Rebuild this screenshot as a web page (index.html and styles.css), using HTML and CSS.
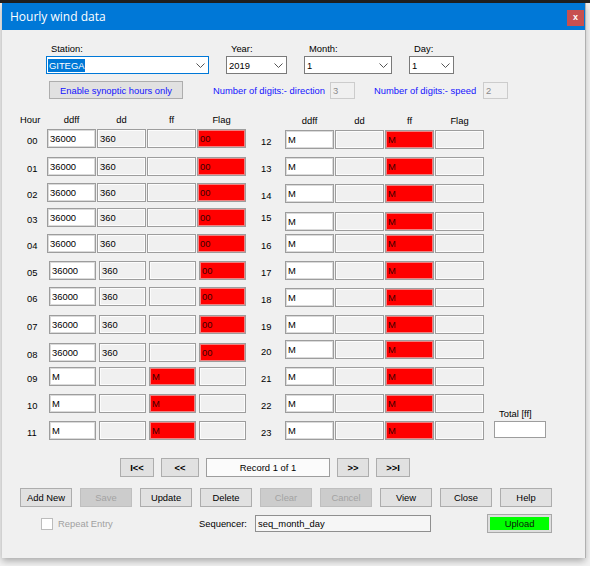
FILE: index.html
```html
<!DOCTYPE html>
<html>
<head>
<meta charset="utf-8">
<title>Hourly wind data</title>
<link rel="stylesheet" href="styles.css">
</head>
<body>
<div class="window">
  <div class="titlebar">
    <span class="title">Hourly wind data</span>
    <span class="close">x</span>
  </div>
  <div class="content">
    <div class="selectors">
      <div class="field f-station">
        <label>Station:</label>
        <div class="combo focused"><span class="sel">GITEGA</span><svg class="chev" width="9" height="5" viewBox="0 0 9 5"><polyline points="0.5,0.5 4.5,4.5 8.5,0.5" fill="none" stroke="#555" stroke-width="1"/></svg></div>
      </div>
      <div class="field f-year">
        <label>Year:</label>
        <div class="combo"><span>2019</span><svg class="chev" width="9" height="5" viewBox="0 0 9 5"><polyline points="0.5,0.5 4.5,4.5 8.5,0.5" fill="none" stroke="#555" stroke-width="1"/></svg></div>
      </div>
      <div class="field f-month">
        <label>Month:</label>
        <div class="combo"><span>1</span><svg class="chev" width="9" height="5" viewBox="0 0 9 5"><polyline points="0.5,0.5 4.5,4.5 8.5,0.5" fill="none" stroke="#555" stroke-width="1"/></svg></div>
      </div>
      <div class="field f-day">
        <label>Day:</label>
        <div class="combo"><span>1</span><svg class="chev" width="9" height="5" viewBox="0 0 9 5"><polyline points="0.5,0.5 4.5,4.5 8.5,0.5" fill="none" stroke="#555" stroke-width="1"/></svg></div>
      </div>
    </div>

    <div class="options">
      <button class="btn synoptic">Enable synoptic hours only</button>
      <span class="digits-label dl-dir">Number of digits:- direction</span>
      <span class="digits-box">3</span>
      <span class="digits-label dl-speed">Number of digits:- speed</span>
      <span class="digits-box">2</span>
    </div>

    <div class="tables">
      <div class="grid grid-left">
        <div class="hdr hdr-hour">Hour</div><div class="hdr">ddff</div><div class="hdr">dd</div><div class="hdr">ff</div><div class="hdr">Flag</div>
        <div class="hr">00</div><div class="box white">36000</div><div class="box grey">360</div><div class="box grey"></div><div class="box red">00</div>
        <div class="hr">01</div><div class="box white">36000</div><div class="box grey">360</div><div class="box grey"></div><div class="box red">00</div>
        <div class="hr">02</div><div class="box white">36000</div><div class="box grey">360</div><div class="box grey"></div><div class="box red">00</div>
        <div class="hr">03</div><div class="box white">36000</div><div class="box grey">360</div><div class="box grey"></div><div class="box red">00</div>
        <div class="hr">04</div><div class="box white">36000</div><div class="box grey">360</div><div class="box grey"></div><div class="box red">00</div>
        <div class="hr">05</div><div class="box white s">36000</div><div class="box grey s">360</div><div class="box grey s"></div><div class="box red s">00</div>
        <div class="hr">06</div><div class="box white s">36000</div><div class="box grey s">360</div><div class="box grey s"></div><div class="box red s">00</div>
        <div class="hr">07</div><div class="box white s">36000</div><div class="box grey s">360</div><div class="box grey s"></div><div class="box red s">00</div>
        <div class="hr">08</div><div class="box white s">36000</div><div class="box grey s">360</div><div class="box grey s"></div><div class="box red s">00</div>
        <div class="hr">09</div><div class="box white s">M</div><div class="box grey s"></div><div class="box red s">M</div><div class="box grey s"></div>
        <div class="hr">10</div><div class="box white s">M</div><div class="box grey s"></div><div class="box red s">M</div><div class="box grey s"></div>
        <div class="hr">11</div><div class="box white s">M</div><div class="box grey s"></div><div class="box red s">M</div><div class="box grey s"></div>
      </div>

      <div class="grid grid-right">
        <div class="hdr"></div><div class="hdr">ddff</div><div class="hdr">dd</div><div class="hdr">ff</div><div class="hdr">Flag</div>
        <div class="hr">12</div><div class="box white">M</div><div class="box grey"></div><div class="box red">M</div><div class="box grey"></div>
        <div class="hr">13</div><div class="box white">M</div><div class="box grey"></div><div class="box red">M</div><div class="box grey"></div>
        <div class="hr">14</div><div class="box white">M</div><div class="box grey"></div><div class="box red">M</div><div class="box grey"></div>
        <div class="hr up">15</div><div class="box white">M</div><div class="box grey"></div><div class="box red">M</div><div class="box grey"></div>
        <div class="hr">16</div><div class="box white">M</div><div class="box grey"></div><div class="box red">M</div><div class="box grey"></div>
        <div class="hr">17</div><div class="box white">M</div><div class="box grey"></div><div class="box red">M</div><div class="box grey"></div>
        <div class="hr">18</div><div class="box white">M</div><div class="box grey"></div><div class="box red">M</div><div class="box grey"></div>
        <div class="hr">19</div><div class="box white">M</div><div class="box grey"></div><div class="box red">M</div><div class="box grey"></div>
        <div class="hr">20</div><div class="box white">M</div><div class="box grey"></div><div class="box red">M</div><div class="box grey"></div>
        <div class="hr">21</div><div class="box white">M</div><div class="box grey"></div><div class="box red">M</div><div class="box grey"></div>
        <div class="hr">22</div><div class="box white">M</div><div class="box grey"></div><div class="box red">M</div><div class="box grey"></div>
        <div class="hr">23</div><div class="box white">M</div><div class="box grey"></div><div class="box red">M</div><div class="box grey"></div>
      </div>

      <div class="total">
        <div class="total-label">Total [ff]</div>
        <div class="total-box"></div>
      </div>
    </div>

    <div class="nav">
      <button class="btn navbtn w-first">I&lt;&lt;</button>
      <button class="btn navbtn w-prev">&lt;&lt;</button>
      <div class="record">Record 1 of 1</div>
      <button class="btn navbtn w-next">&gt;&gt;</button>
      <button class="btn navbtn w-last">&gt;&gt;I</button>
    </div>

    <div class="actions">
      <button class="btn">Add New</button>
      <button class="btn disabled">Save</button>
      <button class="btn">Update</button>
      <button class="btn">Delete</button>
      <button class="btn disabled">Clear</button>
      <button class="btn disabled">Cancel</button>
      <button class="btn">View</button>
      <button class="btn">Close</button>
      <button class="btn">Help</button>
    </div>

    <div class="bottom">
      <span class="check"></span>
      <span class="repeat-text">Repeat Entry</span>
      <span class="seq-label">Sequencer:</span>
      <span class="seq-input">seq_month_day</span>
      <button class="upload">Upload</button>
    </div>
  </div>
</div>
</body>
</html>
```

FILE: styles.css
```css
* { box-sizing: border-box; }
html, body { margin: 0; }
body {
  width: 590px;
  height: 566px;
  overflow: hidden;
  padding: 3px 0 0 2px;
  background: linear-gradient(#202020 0 3px, #f2f2f2 3px);
  font-family: "Liberation Sans", Arial, sans-serif;
  font-size: 9.4px;
  color: #000;
}
.window {
  width: 583px;
  height: 555px;
  background: #f0f0f0;
  box-shadow: 1px 0 0 #b0b0b0, 0 3px 7px rgba(0,0,0,0.3);
}
.titlebar {
  height: 27px;
  background: #0078d7;
  display: flex;
  align-items: center;
  justify-content: space-between;
  padding-left: 8px;
}
.title {
  font-family: "Open Sans", "Noto Sans", sans-serif;
  font-size: 12px;
  color: #fff;
}
.close {
  width: 17px;
  height: 16px;
  margin: 3px 1px 0 0;
  background: #c75050;
  color: #fff;
  font: bold 9px/15px "Liberation Sans", sans-serif;
  text-align: center;
}
.content { padding-top: 12px; }

/* selectors */
.selectors { display: flex; gap: 17px; padding-left: 44px; }
.field label { display: block; height: 13px; line-height: 13px; padding-left: 5px; margin-bottom: 1px; }
.combo {
  height: 18px;
  background: #fff;
  border: 1px solid #7a7a7a;
  display: flex;
  align-items: center;
  justify-content: space-between;
  padding: 0 3px 0 2px;
}
.combo.focused { border-color: #0078d7; padding-left: 1px; }
.sel { background: #0078d7; color: #fff; line-height: 13px; padding: 0 1px; }
.f-station .combo { width: 163px; }
.f-year .combo { width: 61px; }
.f-month .combo { width: 88px; }
.f-day .combo { width: 45px; }

/* options */
.options { display: flex; align-items: center; height: 18px; margin-top: 7px; padding-left: 47px; }
.btn {
  height: 19px;
  padding: 0;
  background: #e1e1e1;
  border: 1px solid #adadad;
  font: inherit;
  color: #000;
}
.synoptic { width: 134px; height: 18px; color: #1414ff; }
.digits-label { color: #1414ff; }
.dl-dir { margin-left: 30px; width: 117px; }
.dl-speed { margin-left: 19px; width: 109px; }
.digits-box {
  width: 25px;
  height: 17px;
  line-height: 15px;
  padding-left: 2px;
  background: #f0f0f0;
  border: 1px solid #cccccc;
  color: #8a8a8a;
}

/* tables */
.tables { display: flex; align-items: flex-end; margin-top: 14px; padding-left: 16px; }
.grid { display: grid; column-gap: 1px; }
.grid-left {
  grid-template-columns: 28px repeat(4, 49px);
  grid-template-rows: 16px 28px 26px 25px 26px 27px 26px 28px 28px 24px 27px 27px 19px;
}
.grid-right {
  margin-left: 15px;
  grid-template-columns: 23px repeat(4, 49px);
  grid-template-rows: 17px 27px 27px 28px 22px 27px 27px 27px 25px 27px 27px 27px 19px;
}
.hdr { text-align: center; align-self: center; line-height: 12px; padding-bottom: 2px; }
.hdr-hour { text-align: left; padding-left: 2px; }
.hr { align-self: start; line-height: 19px; padding-top: 2px; padding-left: 9px; }
.grid-right .hr { padding-left: 0; }
.grid-right .hr.up { padding-top: 0; margin-top: -4px; }
.box {
  align-self: start;
  height: 19px;
  line-height: 17px;
  padding-left: 2px;
  border: 1px solid #9d9d9d;
  white-space: nowrap;
  overflow: hidden;
}
.box.s { margin-left: 2px; }
.white { background: #fff; box-shadow: inset 0 0 0 1px #dadada; }
.grey { background: #f0f0f0; box-shadow: inset 0 0 0 1px #fcfcfc; }
.red { background: #ff0000; box-shadow: inset 0 0 0 1px #f08080; color: #3a0000; }

.total { margin-left: 10px; margin-bottom: 2px; width: 52px; }
.total-label { padding-left: 5px; line-height: 12px; margin-bottom: 1px; }
.total-box { height: 17px; background: #fff; border: 1px solid #9d9d9d; }

/* nav */
.nav { display: flex; gap: 7px; height: 19px; margin-top: 18px; padding-left: 118px; }
.navbtn { font-weight: bold; }
.w-first { width: 34px; }
.w-prev { width: 38px; }
.w-next { width: 32px; }
.w-last { width: 34px; }
.record {
  width: 124px;
  height: 19px;
  line-height: 17px;
  text-align: center;
  background: #fbfbfb;
  border: 1px solid #9d9d9d;
}

/* actions */
.actions { display: flex; gap: 8px; margin-top: 11px; padding-left: 18px; }
.actions .btn { width: 52px; }
.btn.disabled { background: #cccccc; border-color: #bfbfbf; color: #a3a3a3; }

/* bottom */
.bottom { display: flex; align-items: center; height: 19px; margin-top: 7px; padding-left: 39px; }
.check { width: 12px; height: 12px; border: 1px solid #bcbcbc; background: #fff; }
.repeat-text { color: #a0a0a0; margin-left: 5px; width: 141px; }
.seq-label { width: 56px; }
.seq-input {
  width: 176px;
  height: 17px;
  line-height: 15px;
  padding-left: 2px;
  background: #f6f6f6;
  border: 1px solid #8f8f8f;
}
.upload {
  margin-left: 56px;
  width: 65px;
  height: 19px;
  padding: 0;
  background: #00ff00;
  border: 1px solid #a8a8a8;
  box-shadow: inset 0 0 0 2px #dedede;
  font: inherit;
  color: #0a1a0a;
}
```
